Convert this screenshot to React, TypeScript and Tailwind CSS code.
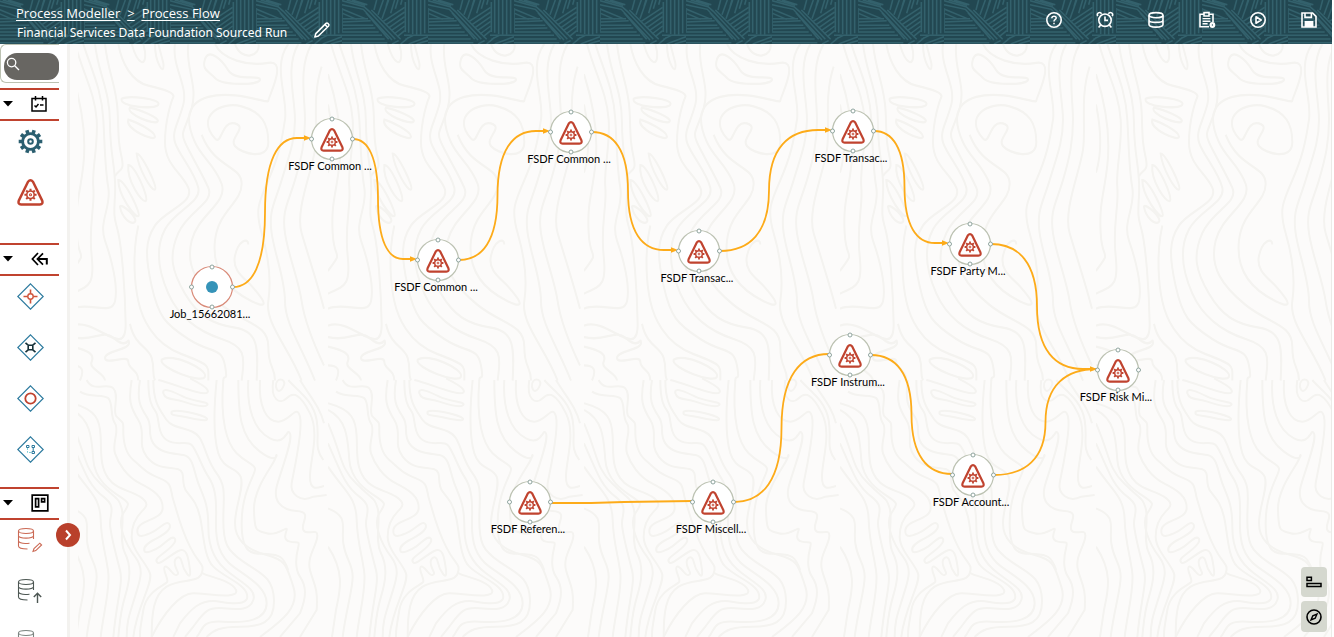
import React from "react";

type NodeData = { id: string; x: number; y: number; label: string; start?: boolean };
type EdgeData = { from: string; to: string; arrow: boolean };

const NODES: NodeData[] = [
  { id: "job", x: 212, y: 287, label: "Job_15662081...", start: true },
  { id: "common1", x: 332, y: 139, label: "FSDF Common ..." },
  { id: "common2", x: 438, y: 260, label: "FSDF Common ..." },
  { id: "common3", x: 571, y: 132, label: "FSDF Common ..." },
  { id: "trans1", x: 699, y: 251, label: "FSDF Transac..." },
  { id: "trans2", x: 853, y: 131, label: "FSDF Transac..." },
  { id: "party", x: 970, y: 244, label: "FSDF Party M..." },
  { id: "risk", x: 1118, y: 370, label: "FSDF Risk Mi..." },
  { id: "instrument", x: 850, y: 355, label: "FSDF Instrum..." },
  { id: "account", x: 973, y: 475, label: "FSDF Account..." },
  { id: "misc", x: 713, y: 502, label: "FSDF Miscell..." },
  { id: "reference", x: 530, y: 502, label: "FSDF Referen..." },
];

const EDGES: EdgeData[] = [
  { from: "job", to: "common1", arrow: true },
  { from: "common1", to: "common2", arrow: true },
  { from: "common2", to: "common3", arrow: true },
  { from: "common3", to: "trans1", arrow: true },
  { from: "trans1", to: "trans2", arrow: true },
  { from: "trans2", to: "party", arrow: true },
  { from: "party", to: "risk", arrow: true },
  { from: "reference", to: "misc", arrow: false },
  { from: "misc", to: "instrument", arrow: false },
  { from: "instrument", to: "account", arrow: false },
  { from: "account", to: "risk", arrow: false },
];

// Node coordinates are measured from the window's corner; the canvas starts below the header.
const CANVAS_LEFT = 67;
const CANVAS_TOP = 44;

function edgePath(edge: EdgeData): string {
  const a = NODES.find((n) => n.id === edge.from)!;
  const b = NODES.find((n) => n.id === edge.to)!;
  const x1 = a.x + 21;
  const y1 = a.y;
  const tip = b.x - 21;
  const y2 = b.y - 1;
  const x2 = edge.arrow ? tip - 14 : tip;
  if (Math.abs(y1 - y2) < 4) return `M${x1} ${y1 + 1}H${x1 + 40}L${x2 - 68} ${y2 + 1}L${x2} ${y2}`;
  const mx = (x1 + x2) / 2;
  const my = (y1 + y2) / 2;
  const c = (mx - x1) * 0.6;
  const v = (my - y1) * 0.3;
  const tail = edge.arrow ? `H${tip - 6}` : "";
  return `M${x1} ${y1}C${x1 + c} ${y1} ${mx} ${y1 + v} ${mx} ${my}S${x2 - c} ${y2} ${x2} ${y2}${tail}`;
}

// Short radial strokes, one for each tooth of a gear.
function gearTeeth(cx: number, cy: number, inner: number, outer: number, teeth: number): string {
  const parts: string[] = [];
  for (let i = 0; i < teeth; i++) {
    const t = (i * Math.PI * 2) / teeth;
    const at = (r: number) => `${(cx + r * Math.cos(t)).toFixed(2)} ${(cy + r * Math.sin(t)).toFixed(2)}`;
    parts.push(`M${at(inner)}L${at(outer)}`);
  }
  return parts.join("");
}

function TriangleIcon({ className }: { className: string }) {
  return (
    <svg viewBox="0 0 24 24" className={className} fill="none" stroke="#c0432f" aria-hidden="true">
      <path d="M9.8 2.4Q12 -0.2 14.2 2.4L22.4 19.2Q23.4 22.6 20.4 22.6H3.6Q0.6 22.6 1.6 19.2Z" strokeWidth="2.2" strokeLinejoin="round" />
      <circle cx="12" cy="14" r="3.3" strokeWidth="1.4" />
      <path d={gearTeeth(12, 14, 3.6, 5.4, 8)} strokeWidth="1.8" />
      <circle cx="12" cy="14" r="0.9" strokeWidth="0.9" />
    </svg>
  );
}

function GearIcon() {
  return (
    <svg viewBox="0 0 27 27" className="size-[27px]" fill="none" stroke="#2b5f70" aria-hidden="true">
      <circle cx="13.5" cy="13.5" r="7.9" strokeWidth="2.8" />
      <path d={gearTeeth(13.5, 13.5, 8.4, 11.8, 10)} strokeWidth="3.6" />
      <circle cx="13.5" cy="13.5" r="2.3" strokeWidth="2" />
    </svg>
  );
}

function Diamond({ children }: { children: React.ReactNode }) {
  return (
    <svg viewBox="0 0 27 27" className="size-[27px]" fill="none" aria-hidden="true">
      <path d="M13.5 .8L26.2 13.5L13.5 26.2L.8 13.5Z" stroke="#2c7a9e" strokeWidth="1.2" />
      {children}
    </svg>
  );
}

function StackIcon({ color, children }: { color: string; children: React.ReactNode }) {
  return (
    <svg viewBox="0 0 27 27" className="size-[27px]" fill="none" stroke={color} strokeWidth="1.1" aria-hidden="true">
      <ellipse cx="9" cy="4" rx="7.5" ry="2.5" />
      <path d="M1.5 4V19C1.5 21.5 5.5 22 10.5 22M16.5 4V12M1.5 9C2.5 11.8 15.5 11.8 16.5 9M1.5 14C2.5 16.5 8.5 16.6 12.5 16.2" />
      {children}
    </svg>
  );
}

function HeaderBackdrop() {
  return (
    <svg className="absolute inset-0 size-full" aria-hidden="true">
      <defs>
        <pattern id="weave" x="-2" width="86" height="44" patternUnits="userSpaceOnUse">
          <rect width="86" height="44" fill="#224751" />
          <g transform="scale(.3333)" fill="none" stroke="#33616c" strokeWidth="4.6">
            <path d="M0 24V98M-10 0V110M248 0V100M236 0V104M224 0V104M212 0V102M200 0V98M190 6V96" />
            <path d="M2 28L70 56M2 40L44 58M2 56H78M2 66L86 62M2 76H94M2 86L100 84M2 96H110" />
            <path d="M0 2L66 20L82 34L160 118M14 0L70 16M30 0L76 14M0 14L64 28L150 120M72 38L140 118M88 30L176 118" />
            <path d="M96 30L104 0M108 44L124 0M120 56L140 0M132 20L138 0M146 40L158 0M160 26L168 0M176 14L180 0" />
            <path d="M124 64L188 22M132 74L188 36M140 84L188 50M148 92L188 64M156 102L188 78M166 110L188 92" />
            <path d="M0 106H120M0 117H128M0 128H136M186 106H258M190 118L214 106M200 132L258 110M176 132L200 112M224 132L258 122M150 132L170 122" />
          </g>
        </pattern>
      </defs>
      <rect width="100%" height="100%" fill="url(#weave)" />
    </svg>
  );
}

function ContourBackdrop() {
  return (
    <svg className="absolute inset-0 size-full" aria-hidden="true">
      <defs>
        <pattern id="contours" x="5" width="256" height="593" patternUnits="userSpaceOnUse">
          <g fill="none" stroke="#f4f3f0" strokeWidth="6">
            <g transform="translate(8 336) scale(.3333)">
              <path d="M20 0C40 40 80 5 100 25S95 95 110 110S130 125 130 140S125 210 160 240S200 280 240 295S270 330 280 360S300 440 330 500S375 550 365 580S300 595 260 620S215 700 215 771" />
              <path d="M0 35C30 55 70 40 85 55S90 110 105 130S95 190 105 220S140 290 180 310S250 350 248 385S175 420 172 450S200 465 220 455S260 420 268 432S260 460 230 475S190 500 193 512S225 510 240 500S275 465 284 475S270 505 250 520S225 540 232 548S270 525 295 513S325 530 330 570S310 570 305 545S280 535 285 555S300 580 290 585S265 555 255 560S265 595 262 605S200 630 190 690S180 750 180 771" />
              <path d="M-24 70C50 90 60 120 62 170S60 260 85 295S150 330 180 350S200 380 185 395S155 430 155 470S200 550 210 580S170 680 160 771" />
              <path d="M-24 90C35 120 35 180 40 240S90 330 120 350S150 370 130 400S135 490 165 530S180 600 165 650S140 720 140 771" />
              <path d="M-24 130C20 230 10 260 60 310S115 350 125 385S115 480 135 520S150 600 135 650S120 720 115 771" />
              <path d="M-24 190C20 290 30 320 70 350S90 400 90 430S110 530 120 570S110 660 100 771" />
              <path d="M-24 260C30 340 60 350 62 420S80 530 85 580S70 700 62 771M-24 385C40 410 15 440 22 490S50 550 50 590S30 690 20 771M-24 500C30 580 10 640 0 690L-12 771" />
              <path d="M155 0C145 60 150 80 175 120S170 190 200 230S270 260 295 268S300 310 320 335S350 370 360 410S370 530 400 560S490 610 500 640S480 675 420 665S330 690 300 730L280 771" />
              <path d="M180 0C170 60 180 80 200 110S200 160 220 190S280 220 310 225S340 270 355 310S385 370 385 440S410 550 450 580S530 630 520 660S480 690 430 685S370 700 340 740L315 771" />
              <path d="M205 0C205 60 215 80 227 95S230 160 260 180S320 180 335 195S365 260 385 290S410 350 408 420S420 530 460 560S560 620 560 670S500 730 430 725S370 750 350 771" />
              <path d="M220 0C220 70 240 90 260 120S340 140 360 175S380 240 410 280S430 350 430 420S440 510 490 545S580 590 582 660S540 740 480 740S400 750 380 771" />
              <path d="M250 40C245 20 280 35 310 50S390 65 382 75S340 75 310 65S255 60 250 40ZM275 95C290 85 370 105 380 115S350 120 320 112S270 110 275 95ZM235 0C280 10 370 50 382 38S340 0 330 -5" />
              <path d="M410 0C400 100 400 170 415 220S470 260 482 290S465 380 465 430S500 510 560 525S620 560 640 620S610 720 540 771" />
              <path d="M430 0C420 120 440 190 470 220S520 250 525 265S485 330 485 430S520 520 560 522S610 530 625 570" />
              <path d="M475 0C475 100 480 170 540 215S590 210 588 230S520 320 522 390S530 450 560 460S625 435 620 450S610 480 630 485S660 480 655 500S640 560 660 590S680 650 660 700L600 771" />
              <path d="M505 0C500 80 520 150 570 175S620 140 630 160S600 280 590 320S600 390 650 393S660 430 670 450S715 440 712 470S680 530 690 570S715 620 710 690L660 771" />
              <path d="M540 0C535 80 560 125 595 125S650 70 660 110S640 280 635 310S660 370 700 350L740 345M580 0C570 60 600 75 620 55S660 40 690 100S690 240 690 290S720 320 732 318M588 20C585 -10 620 -5 612 15S592 40 588 20Z" />
              <path d="M625 0C650 30 700 60 710 120S700 200 730 240M660 0C690 50 720 80 732 130M215 771C250 700 300 640 340 640S480 660 468 630S380 590 366 578" />
            </g>
            <g transform="translate(-17 0) scale(.3333 .3782)">
              <path d="M60 0C85 80 120 130 125 200S110 330 115 380S100 480 110 560S100 640 51 660" />
              <path d="M85 0C110 70 140 120 145 200S150 330 160 380S130 470 150 520S190 640 180 680S100 680 51 700" />
              <path d="M120 0C130 80 165 120 165 210S185 330 180 400S180 460 190 500S210 640 212 740S120 720 51 745" />
              <path d="M51 80C80 160 95 240 85 320S60 420 65 500S100 540 51 600M51 160C70 240 65 300 51 340" />
              <path d="M150 0C160 80 185 110 188 180S190 260 200 300S190 330 180 350" />
              <path d="M190 0C200 50 230 100 280 110S360 130 355 140S330 200 330 260S380 340 400 380S330 440 300 480S270 560 290 640S330 740 400 780S500 800 510 850S505 870 505 890" />
              <path d="M200 145C190 165 300 175 310 160S220 135 200 145ZM225 168C210 185 300 215 308 205S250 172 225 168ZM220 200C210 225 300 260 300 245S240 205 220 200Z" />
              <path d="M245 290C250 330 290 390 300 385S260 290 245 290ZM220 320C215 360 260 420 272 415S240 320 220 320ZM190 360C190 400 240 460 250 455S210 360 190 360ZM195 430C200 460 230 480 240 470S200 420 195 430Z" />
              <path d="M230 0C250 60 275 60 270 20L265 0M300 0C300 50 330 90 325 50L310 0" />
              <path d="M360 0C350 60 400 110 385 160S350 230 360 260S420 340 430 380S360 440 330 490S310 600 340 660S430 760 500 780S570 820 560 890" />
              <path d="M400 0C390 60 430 110 410 170S375 230 390 260S440 340 460 380S400 440 370 500S350 600 390 660S470 740 540 750S610 800 605 890" />
              <path d="M450 40C460 10 500 40 520 70S620 80 615 95S500 110 480 90S440 70 450 40Z" />
              <path d="M480 0C500 40 580 60 640 50S640 140 640 150S540 120 460 140S400 220 420 260S480 320 500 370S430 450 410 520S430 640 500 690S640 740 640 800S660 850 660 890" />
              <path d="M480 250C420 190 500 150 560 165S640 210 640 260S560 290 540 270S580 220 540 210S500 270 480 250Z" />
              <path d="M540 0C560 50 620 30 610 0M440 240C480 330 560 320 560 370S490 440 480 520S520 650 590 680S610 660 590 640S530 600 540 560S580 510 580 530" />
              <path d="M700 0C650 60 700 140 690 200S670 300 640 360S600 440 620 500S650 620 640 680S700 800 740 890" />
              <path d="M730 0C690 60 720 140 720 200S700 300 680 360S640 440 650 500S690 620 690 680S740 800 780 890" />
              <path d="M770 0C730 60 750 140 750 200S740 300 720 360S680 440 690 500S730 620 740 680S780 800 807 850M800 60C770 140 790 220 780 280S720 440 740 500S790 640 807 700" />
              <path d="M51 775C120 790 140 750 180 780S220 770 222 790S150 810 150 830S220 820 220 840S250 860 250 890M51 800C100 810 120 820 110 840S150 870 150 890M51 850C80 850 90 860 75 890" />
              <path d="M250 480C230 560 240 640 250 680S290 790 380 820S460 850 460 890M225 740C240 800 280 800 290 830S290 870 300 890M320 835C310 855 440 900 450 880S350 815 320 835Z" />
            </g>
          </g>
        </pattern>
      </defs>
      <rect x="11" width="100%" height="100%" fill="url(#contours)" />
    </svg>
  );
}

function FlowNode({ node }: { node: NodeData }) {
  return (
    <div
      className="absolute flex w-24 -translate-x-1/2 flex-col items-center"
      style={{ left: node.x - CANVAS_LEFT, top: node.y - CANVAS_TOP - 23 }}
    >
      <svg viewBox="0 0 46 46" className="h-[46px] w-[46px] shrink-0" fill="none" aria-hidden="true">
        <circle cx="23" cy="23" r="20.5" fill="#fff" stroke={node.start ? "#d98a78" : "#bcc2b2"} strokeWidth="1.2" />
        {node.start && <circle cx="23" cy="23" r="6" fill="#3593b8" />}
        <g fill="#fff" stroke="#8fa59f">
          <circle cx="23" cy="3" r="2" />
          <circle cx="23" cy="43" r="2" />
          <circle cx="2.5" cy="23" r="2" />
          <circle cx="43.5" cy="23" r="2" />
        </g>
        {!node.start && (
          <svg x="11" y="12" width="24" height="24">
            <TriangleIcon className="size-6" />
          </svg>
        )}
      </svg>
      <span className="-mt-1 mr-1 font-[Lato,'Open_Sans',sans-serif] text-[11px] leading-4 whitespace-nowrap text-black">
        {node.label}
      </span>
    </div>
  );
}

function SectionBar({ label, children }: { label: string; children: React.ReactNode }) {
  return (
    <button
      type="button"
      aria-label={label}
      className="flex h-[33px] w-[59px] shrink-0 items-center gap-[18px] border-y-2 border-[#c0432f] pb-0.5 pl-[3px]"
    >
      <svg viewBox="0 0 10 6" className="h-[6px] w-[10px]" aria-hidden="true">
        <path d="M0 0H10L5 5.5Z" fill="#000" />
      </svg>
      {children}
    </button>
  );
}

function PaletteItem({ label, children }: { label: string; children: React.ReactNode }) {
  return (
    <button type="button" aria-label={label} className="size-[27px] shrink-0">
      {children}
    </button>
  );
}

function HeaderButton({ label, children }: { label: string; children: React.ReactNode }) {
  return (
    <button type="button" aria-label={label} className="size-[18px]">
      <svg viewBox="0 0 18 18" className="size-[18px]" fill="none" stroke="#fff" strokeWidth="1.6" aria-hidden="true">
        {children}
      </svg>
    </button>
  );
}

export default function App() {
  return (
    <div className="flex h-screen flex-col overflow-hidden bg-white pr-[2px] font-['Open_Sans','Noto_Sans',sans-serif]">
      <header className="relative flex h-11 shrink-0 items-center justify-between pr-[14px] pl-4 text-white">
        <HeaderBackdrop />
        <div className="relative flex items-end gap-[26px] pt-[2px]">
          <div className="text-[13px] leading-5">
            <nav aria-label="Breadcrumb" className="flex gap-[7px] underline underline-offset-2">
              <a href="#modeller">Process Modeller</a>
              <span>&gt;</span>
              <a href="#flow">Process Flow</a>
            </nav>
            <h1 className="pl-px font-['Noto_Sans','Open_Sans',sans-serif] text-[12px] leading-5">
              Financial Services Data Foundation Sourced Run
            </h1>
          </div>
          <button type="button" aria-label="Edit name" className="mb-1 size-[18px]">
            <svg viewBox="0 0 18 18" className="size-[18px]" fill="none" stroke="#fff" strokeWidth="1.5" aria-hidden="true">
              <path d="M1.8 16L2.8 12.6L13 2.4Q14 1.4 15.2 2.6Q16.6 3.8 15.6 5L5.4 15ZM12 3.6L14.4 6" strokeLinejoin="round" />
            </svg>
          </button>
        </div>
        <div className="relative -mt-1 flex items-center gap-[33px]">
          <HeaderButton label="Help">
            <circle cx="9" cy="9" r="7.2" />
            <path d="M6.8 7.2Q6.9 5.2 9 5.2Q11.2 5.2 11.2 7Q11.2 8 10 8.7Q9 9.3 9 10.4M9 11.8V13.2" strokeWidth="1.5" />
          </HeaderButton>
          <HeaderButton label="Schedule">
            <circle cx="9" cy="9.2" r="6.2" />
            <path d="M9 5.6V9.4H12M4.6 14L2.6 16.4M13.4 14L15.4 16.4" />
            <path d="M1.8 5.2Q.6 3 2.4 1.9Q4.3 .9 5.6 2.7M16.2 5.2Q17.4 3 15.6 1.9Q13.7 .9 12.4 2.7" />
          </HeaderButton>
          <HeaderButton label="Data">
            <ellipse cx="9" cy="4.2" rx="7" ry="2.6" />
            <path d="M2 4.2V13.6C2 17 16 17 16 13.6V4.2M2 9C2 12.2 16 12.2 16 9" />
          </HeaderButton>
          <HeaderButton label="Definition">
            <path d="M6 3.2H2V15.8H11M11 3.2H15V11M6 1.6H11V5H6Z" />
            <path d="M4.6 7.6H12.4M4.6 10.2H12.4M4.6 12.8H9.6" strokeWidth="1.4" />
            <circle cx="14.4" cy="14" r="1.8" strokeWidth="2.2" />
          </HeaderButton>
          <HeaderButton label="Execute">
            <circle cx="9" cy="9" r="7.2" />
            <path d="M7 5.8L12.2 9L7 12.2Z" strokeLinejoin="round" />
          </HeaderButton>
          <HeaderButton label="Save">
            <path d="M2 2H12.6L16 5.4V16H2Z" />
            <path d="M4.6 10H13.4V16H4.6Z" fill="#fff" stroke="none" />
            <path d="M5 2V6.4H11.4V2" />
          </HeaderButton>
        </div>
      </header>

      <div className="flex min-h-0 flex-1">
        <aside className="relative z-10 flex w-[67px] shrink-0 flex-col bg-white">
          <div className="flex min-h-0 flex-1 flex-col overflow-hidden">
            <div className="mb-[5px] flex h-[39px] w-[59px] shrink-0 items-center rounded-l-md border border-r-0 border-[#bcc2b2] pl-[3px]">
              <label className="mt-[5px] flex h-[27px] w-full items-start rounded-l-[13px] rounded-r-[11px] bg-[#686662] pt-1 pl-[2px]">
                <svg viewBox="0 0 14 14" className="size-[14px] shrink-0" fill="none" stroke="#fff" strokeWidth="1.3" aria-hidden="true">
                  <circle cx="5.6" cy="5.6" r="4.2" />
                  <path d="M8.7 8.7L13 13" />
                </svg>
                <input type="text" aria-label="Search" className="w-0 flex-1 bg-transparent text-[11px] text-white outline-none" />
              </label>
            </div>

            <SectionBar label="Activities">
              <svg viewBox="0 0 16 16" className="size-4" fill="none" stroke="#000" strokeWidth="1.5" aria-hidden="true">
                <path d="M1 2.5H15V15H1ZM4.5 0V4.5M11.5 0V4.5M3.5 9.5L5 11L7.5 8M9 9H12.5" />
              </svg>
            </SectionBar>
            <div className="flex shrink-0 flex-col items-start gap-6 pt-[7px] pb-[37px] pl-[17px]">
              <PaletteItem label="Job">
                <GearIcon />
              </PaletteItem>
              <PaletteItem label="Process">
                <TriangleIcon className="size-[27px]" />
              </PaletteItem>
            </div>

            <SectionBar label="Gateways">
              <svg viewBox="0 0 18 16" className="h-4 w-[18px]" fill="none" stroke="#000" strokeWidth="1.7" aria-hidden="true">
                <path d="M7 2L1.4 8L7 14M12 2.4L6.4 8L12 13.6" />
                <path d="M6.8 8H15.8V13.4" strokeWidth="2" />
              </svg>
            </SectionBar>
            <div className="flex shrink-0 flex-col items-start gap-6 pt-[7px] pb-6 pl-[17px]">
              <PaletteItem label="Parallel gateway">
                <Diamond>
                  <path d="M13.5 6.5V10.8M13.5 16.2V20.5M6.5 13.5H10.8M16.2 13.5H20.5" stroke="#d0553c" strokeWidth="1.6" />
                  <circle cx="13.5" cy="13.5" r="2.7" stroke="#d0553c" strokeWidth="1.4" />
                </Diamond>
              </PaletteItem>
              <PaletteItem label="Exclusive gateway">
                <Diamond>
                  <path d="M11.2 11.2H15.8V15.8H11.2ZM8.5 8.8L11.2 11.2L15.8 11.2L18.5 8.8M8.5 18.2L11.2 15.8M15.8 15.8L18.5 18.2" stroke="#17323a" strokeWidth="1.6" />
                </Diamond>
              </PaletteItem>
              <PaletteItem label="Inclusive gateway">
                <Diamond>
                  <circle cx="13.5" cy="13.5" r="5.2" stroke="#c0432f" strokeWidth="1.8" />
                </Diamond>
              </PaletteItem>
              <PaletteItem label="Split gateway">
                <Diamond>
                  <path d="M9.5 9.5H12V11.5H9.5ZM15 9.5H17.5V11.5H15ZM15 15.5H17.5V17.5H15ZM16.2 11.5V15.5" stroke="#2c7a9e" />
                  <path d="M10.5 12V16.5H14.5" stroke="#7fd0d8" strokeDasharray="2 1" />
                </Diamond>
              </PaletteItem>
            </div>

            <SectionBar label="Data components">
              <svg viewBox="0 0 18 18" className="size-[18px]" fill="none" stroke="#000" strokeWidth="1.7" aria-hidden="true">
                <path d="M1.2 1.2H16.8V16.8H1.2ZM4.6 4.6H7.6V12.8H4.6ZM10.6 4.6H13.6V7.8H10.6Z" />
              </svg>
            </SectionBar>
            <div className="flex shrink-0 flex-col items-start gap-6 pt-[7px] pl-[17px]">
              <PaletteItem label="Edit data">
                <StackIcon color="#cb6a55">
                  <path d="M16 24.5L17 21.5L22.8 16.2L24.6 18L18.8 23.6Z" />
                </StackIcon>
              </PaletteItem>
              <PaletteItem label="Load data">
                <StackIcon color="#4d5753">
                  <path d="M20.5 25V15.5M16.8 19L20.5 15.2L24.2 19" strokeWidth="1.4" />
                </StackIcon>
              </PaletteItem>
              <PaletteItem label="Extract data">
                <StackIcon color="#7c8581">
                  <path d="M20.5 15.5V25" />
                </StackIcon>
              </PaletteItem>
            </div>
          </div>
          <button
            type="button"
            aria-label="Expand palette"
            className="absolute bottom-[90px] left-14 flex size-6 items-center justify-center rounded-full bg-[#b9402b]"
          >
            <svg viewBox="0 0 10 12" className="h-3 w-[10px]" fill="none" stroke="#fff" strokeWidth="2" aria-hidden="true">
              <path d="M3 1.5L7 6L3 10.5" />
            </svg>
          </button>
        </aside>

        <main className="relative min-w-0 flex-1 overflow-hidden border-r border-[#ecebe8] bg-[#fcfbfa]">
          <div className="h-full w-[3px] bg-[#f3f2ef]" />
          <ContourBackdrop />
          <svg className="absolute inset-0 size-full" fill="none" aria-hidden="true">
            <g transform={`translate(${-CANVAS_LEFT} ${-CANVAS_TOP})`}>
              {EDGES.map((edge) => {
                const target = NODES.find((n) => n.id === edge.to)!;
                const tip = target.x - 21;
                const y = target.y - 1;
                return (
                  <g key={`${edge.from}-${edge.to}`}>
                    <path d={edgePath(edge)} stroke="#fdab19" strokeWidth="1.8" />
                    {edge.arrow && <path d={`M${tip} ${y}L${tip - 7} ${y - 2.8}V${y + 2.8}Z`} fill="#fdab19" />}
                  </g>
                );
              })}
            </g>
          </svg>
          {NODES.map((node) => (
            <FlowNode key={node.id} node={node} />
          ))}
          <div className="absolute right-1 bottom-[5px] flex flex-col gap-1">
            <button type="button" aria-label="Align" className="flex h-[30px] w-[26px] items-center justify-center rounded bg-[#d5d8cf]">
              <svg viewBox="0 0 16 12" className="h-3 w-4" fill="none" stroke="#000" strokeWidth="1.5" aria-hidden="true">
                <path d="M1 1.2H5.4V4.4H1ZM1 7.4H15V10.6H1Z" />
              </svg>
            </button>
            <button type="button" aria-label="Navigator" className="flex h-[31px] w-[26px] items-center justify-center rounded bg-[#d5d8cf]">
              <svg viewBox="0 0 16 16" className="size-4" fill="none" stroke="#000" strokeWidth="1.6" aria-hidden="true">
                <circle cx="8" cy="8" r="7" />
                <path d="M11 5L9.2 9.2L5 11L6.8 6.8Z" strokeWidth="1.4" />
              </svg>
            </button>
          </div>
        </main>
      </div>
    </div>
  );
}
